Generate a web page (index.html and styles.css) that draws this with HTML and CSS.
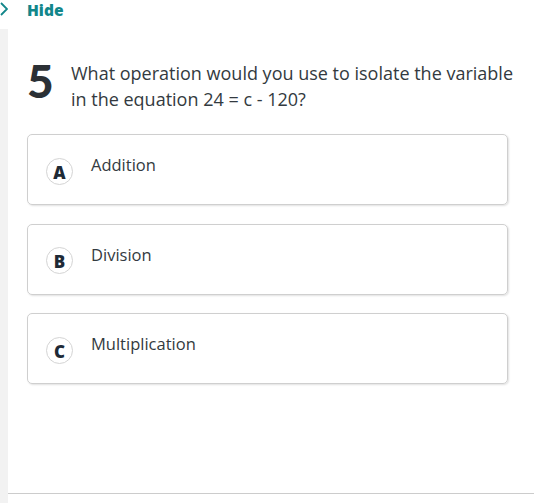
FILE: index.html
```html
<!DOCTYPE html>
<html>
<head>
<meta charset="utf-8">
<link rel="stylesheet" href="styles.css">
</head>
<body>
<header class="topbar">
  <svg class="chev" width="8" height="14" viewBox="0 0 8 14"><path d="M1 1 L7 7 L1 13" fill="none" stroke="#12868a" stroke-width="1.8"/></svg>
  <span class="hide">Hide</span>
</header>
<div class="main">
  <aside class="strip"></aside>
  <div class="content">
    <section class="panel">
      <div class="question">
        <div class="qnum">5</div>
        <div class="qtext">What operation would you use to isolate the variable in the equation 24 = c - 120?</div>
      </div>
      <div class="options">
        <div class="card"><span class="badge">A</span><span class="label">Addition</span></div>
        <div class="card"><span class="badge">B</span><span class="label">Division</span></div>
        <div class="card"><span class="badge">C</span><span class="label">Multiplication</span></div>
      </div>
    </section>
  </div>
</div>
</body>
</html>
```
FILE: styles.css
```css
html, body {
  margin: 0;
  padding: 0;
  background: #ffffff;
  font-family: "Open Sans", Lato, sans-serif;
  color: #333a40;
}
.topbar {
  height: 29px;
  display: flex;
  align-items: flex-start;
  padding-top: 1px;
  box-sizing: border-box;
}
.chev {
  display: block;
  margin-top: 1px;
}
.hide {
  margin-left: 19px;
  font-size: 15.5px;
  font-weight: 800;
  color: #12868a;
  line-height: 18px;
}
.main {
  display: flex;
  height: 474px;
}
.strip {
  width: 8px;
  background: #f2f2f2;
  flex: none;
}
.content {
  flex: 1;
  padding-bottom: 8px;
}
.panel {
  height: 465px;
  border-bottom: 1px solid #cccccc;
  box-sizing: border-box;
  padding: 31px 0 0 19px;
}
.question {
  display: flex;
  align-items: flex-start;
}
.qnum {
  width: 44px;
  font-family: Lato, sans-serif;
  font-size: 46px;
  font-weight: 900;
  line-height: 1;
  color: #2b3035;
  margin-top: -2px;
  box-sizing: border-box;
}
.qtext {
  width: 452px;
  font-size: 18px;
  line-height: 26px;
  color: #333a40;
}
.options {
  margin-top: 22px;
  display: flex;
  flex-direction: column;
  gap: 18.5px;
  width: 481px;
}
.card {
  height: 71px;
  box-sizing: border-box;
  border: 1px solid #cfcfcf;
  border-radius: 5px;
  box-shadow: 1px 1px 2px rgba(0,0,0,0.12);
  display: flex;
  align-items: center;
  padding-left: 18px;
}
.badge {
  width: 25px;
  border: 1px solid #d4d4d4;
  border-radius: 50%;
  display: flex;
  align-items: center;
  justify-content: center;
  font-size: 17px;
  font-weight: 800;
  line-height: 1;
  padding-top: 2px;
  box-sizing: content-box;
  height: 23px;
  color: #1e2a36;
  flex: none;
  margin-top: 3px;
}
.label {
  margin-left: 18px;
  font-size: 16.5px;
  color: #333a40;
  margin-bottom: 10px;
}
```
